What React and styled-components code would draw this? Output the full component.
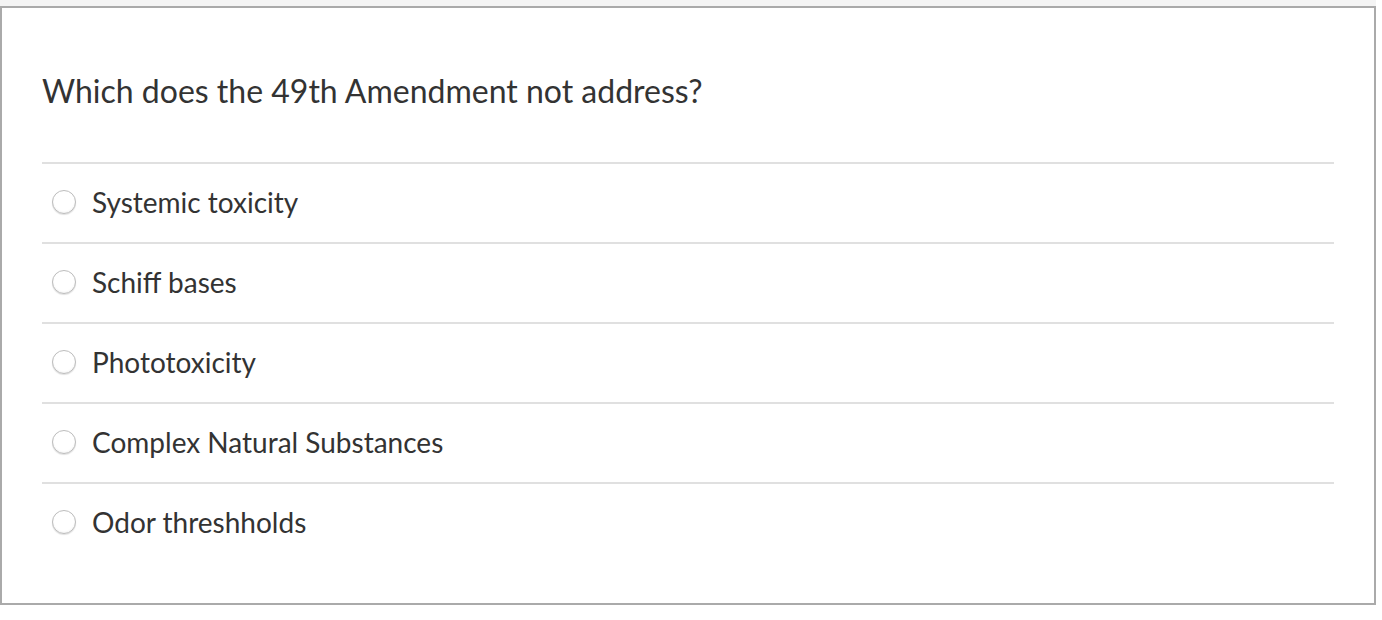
import React from 'react';
import styled, { createGlobalStyle } from 'styled-components';

const GlobalStyle = createGlobalStyle`
    body {
        margin: 0;
        background: #fff;
        font-family: Lato, "Open Sans", sans-serif;
    }
`;

const Page = styled.div`
    width: 1376px;
`;

const TopBand = styled.div`
    height: 6px;
    background-color: #f4f4f4;
`;

const Card = styled.div`
    box-sizing: border-box;
    height: 599px;
    border: 2px solid #aaaaaa;
    padding: 0 40px;
    background: #fff;
`;

const Question = styled.h2`
    margin: 0;
    height: 154px;
    display: flex;
    align-items: center;
    padding-top: 10px;
    box-sizing: border-box;
    font-size: 32px;
    font-weight: 400;
    color: #333;
`;

const Options = styled.div`
    display: flex;
    flex-direction: column;
`;

const Option = styled.label`
    box-sizing: border-box;
    display: flex;
    align-items: center;
    height: 80px;
    border-top: 2px solid #e0e0e0;
    padding: 0 0 3px 10px;
    gap: 16px;
    font-size: 28px;
    color: #333;
    cursor: pointer;
`;

const Radio = styled.span`
    box-sizing: border-box;
    width: 24px;
    height: 24px;
    border-radius: 50%;
    border: 1px solid #bdbdbd;
    background: #fff;
    box-shadow: 0 1px 1px rgba(0, 0, 0, 0.12), inset 0 -1px 2px rgba(0, 0, 0, 0.05);
    flex-shrink: 0;
`;

const answers = [
    'Systemic toxicity',
    'Schiff bases',
    'Phototoxicity',
    'Complex Natural Substances',
    'Odor threshholds',
];

const App = () => {
    return (
        <Page>
            <GlobalStyle />
            <TopBand />
            <Card>
                <Question>Which does the 49th Amendment not address?</Question>
                <Options>
                    {answers.map((a) => (
                        <Option key={a}>
                            <Radio />
                            {a}
                        </Option>
                    ))}
                </Options>
            </Card>
        </Page>
    );
};

export default App;
